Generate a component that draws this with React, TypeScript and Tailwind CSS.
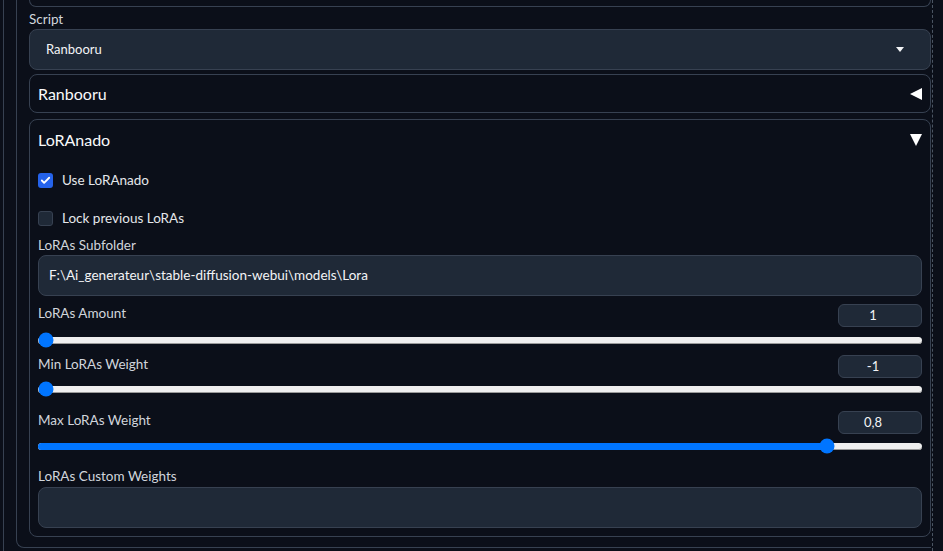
import { Check } from "lucide-react";

const font = { fontFamily: "Lato, 'Noto Sans', sans-serif" };

type SliderProps = { label: string; value: string; pct: number; boxTop: string; sliderTop: string };

const SliderRow = ({ label, value, pct, boxTop, sliderTop }: SliderProps) => (
  <div className={boxTop}>
    <div className="flex items-start justify-between">
      <span className="text-[13.5px] leading-[18px] text-gray-300">{label}</span>
      <div className="flex h-[23px] w-[84px] items-center justify-center rounded-md border border-[#374151] bg-[#1f2937] pr-[14px] text-[13px] text-gray-100">
        {value}
      </div>
    </div>
    <div className={`${sliderTop} flex h-4 items-center`}>
      <div className="relative h-[7px] w-full rounded-full bg-[#efefef] shadow-[inset_0_-1px_0_#9a9a9a]">
        <div className="h-full rounded-full bg-[#0075ff]" style={{ width: `${pct}%` }} />
        <div
          className="absolute top-1/2 h-[15px] w-[15px] -translate-x-1/2 -translate-y-1/2 rounded-full bg-[#0075ff]"
          style={{ left: `calc(8px + (100% - 16px) * ${pct / 100})` }}
        />
      </div>
    </div>
  </div>
);

const Checkbox = ({ checked, label, h }: { checked: boolean; label: string; h: string }) => (
  <div className={`flex items-center gap-[9px] ${h}`}>
    {checked ? (
      <div className="flex h-[15px] w-[15px] items-center justify-center rounded-[3px] bg-[#2563eb]">
        <Check className="h-[11px] w-[11px] text-white" strokeWidth={4} />
      </div>
    ) : (
      <div className="h-[15px] w-[15px] rounded-[3px] border border-[#374151] bg-[#1f2937]" />
    )}
    <span className="text-[13.5px] text-gray-200">{label}</span>
  </div>
);

export default function App() {
  return (
    <div className="flex h-[551px] w-[943px] overflow-hidden bg-[#0b0f19]" style={font}>
      <div className="w-[3px]" />
      <div className="border-l border-[#374151] pl-[12px]">
        <div className="h-[548px] w-[915px] rounded-bl-[8px] border-b border-l border-[#374151] pl-3 pr-[7px]">
          <div className="w-[902px]">
            <div className="h-[7px] rounded-b-lg border-x border-b border-[#374151]" />
            <div className="h-[22px] pt-[3px] text-[13.5px] leading-[18px] text-gray-300">Script</div>
            <div className="flex h-[41px] items-center justify-between rounded-lg border border-[#374151] bg-[#1f2937] pl-4 pr-[26px]">
              <span className="text-[13px] text-gray-100">Ranbooru</span>
              <svg width="8" height="5" viewBox="0 0 8 5">
                <polygon points="0,0 8,0 4,5" fill="#f3f4f6" />
              </svg>
            </div>
            <div className="mt-1 flex h-[39px] items-center justify-between rounded-lg border border-[#374151] pl-2 pr-2">
              <span className="text-[16px] text-gray-50">Ranbooru</span>
              <svg width="12" height="12" viewBox="0 0 12 12">
                <polygon points="12,0 12,12 0,6" fill="#ffffff" />
              </svg>
            </div>
            <div className="mt-[6px] rounded-lg border border-[#374151] px-2 pb-2">
              <div className="flex h-10 items-center justify-between">
                <span className="text-[16px] text-gray-50">LoRAnado</span>
                <svg width="12" height="12" viewBox="0 0 12 12">
                  <polygon points="0,0 12,0 6,12" fill="#ffffff" />
                </svg>
              </div>
              <Checkbox checked label="Use LoRAnado" h="h-10" />
              <Checkbox checked={false} label="Lock previous LoRAs" h="h-9" />
              <div className="h-[18px] text-[13.5px] leading-[18px] text-gray-300">LoRAs Subfolder</div>
              <div className="mt-px flex h-[41px] items-center rounded-lg border border-[#374151] bg-[#1f2937] px-[10px] text-[13.5px] text-gray-100">
                F:\Ai_generateur\stable-diffusion-webui\models\Lora
              </div>
              <SliderRow label="LoRAs Amount" value="1" pct={0} boxTop="mt-2" sliderTop="mt-[5px]" />
              <SliderRow label="Min LoRAs Weight" value="-1" pct={0} boxTop="mt-[7px]" sliderTop="mt-[3px]" />
              <SliderRow label="Max LoRAs Weight" value="0,8" pct={90} boxTop="mt-[14px]" sliderTop="mt-[4px]" />
              <div className="mt-[13px] h-[18px] text-[13.5px] leading-[18px] text-gray-300">LoRAs Custom Weights</div>
              <div className="mt-[2px] h-[41px] rounded-lg border border-[#374151] bg-[#1f2937]" />
            </div>
          </div>
        </div>
      </div>
      <div className="ml-[1px] h-full border-l border-dashed border-[#4b5563]" />
    </div>
  );
}
